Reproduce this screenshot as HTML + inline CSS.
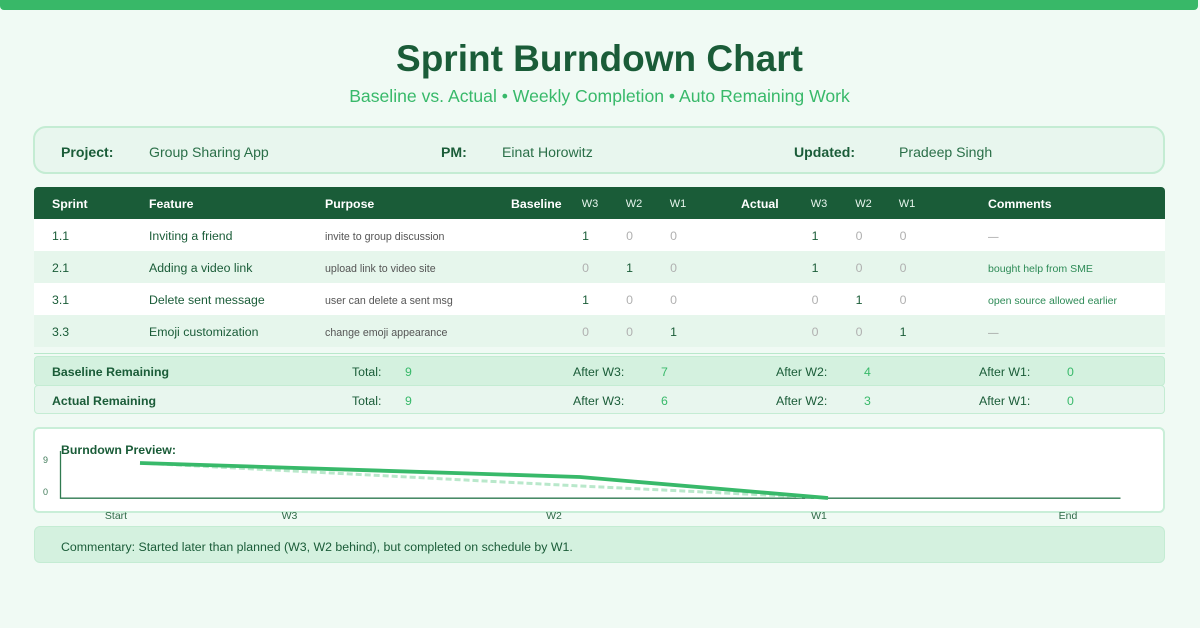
<!DOCTYPE html>
<html><head><meta charset="utf-8">
<style>
html,body{margin:0;padding:0}
body{width:1200px;height:628px;position:relative;overflow:hidden;background:#f0faf4;font-family:"Liberation Sans",sans-serif;color:#1a5c38}
.b{position:absolute;box-sizing:border-box}
.t{position:absolute;white-space:nowrap;line-height:20px;height:20px}
.c{transform:translateX(-50%)}
.hd{color:#fff;font-weight:700;font-size:12.32px}
.hw{color:#e8f6ee;font-size:11px}
.s{font-size:12.32px}
.p{font-size:10.65px;color:#555;margin-top:1px}
.cm{font-size:10.56px;color:#2e8b57;margin-top:1px}
.on{font-size:12.32px;color:#1a5c38}
.off{font-size:12.32px;color:#b0b0b0}
.rl{font-size:12.32px;font-weight:700}
.rk{font-size:12.32px;color:#1a5c38}
.rv{font-size:12.32px;color:#38b96a}
.ik{font-size:14.08px;font-weight:700}
.iv{font-size:14.08px;color:#2a6f48}
.xl{font-size:10.5px;color:#2f6a48;top:506px}
</style></head><body>
<div class="b" style="left:0;top:0;width:1198px;height:10px;background:#38b868;border-radius:0 0 4px 4px"></div>

<div class="t" style="left:0;width:1199px;top:36px;height:46px;line-height:46px;text-align:center;font-size:37px;font-weight:700">Sprint Burndown Chart</div>
<div class="t" style="left:0;width:1199px;top:85px;height:22px;line-height:22px;text-align:center;font-size:17.6px;color:#38b96a">Baseline vs. Actual • Weekly Completion • Auto Remaining Work</div>

<div class="b" style="left:33px;top:126px;width:1132px;height:48px;background:#e8f6ee;border:2px solid #c4ecd3;border-radius:13px"></div>
<div class="t ik" style="left:61px;top:142px">Project:</div>
<div class="t iv" style="left:149px;top:142px">Group Sharing App</div>
<div class="t ik" style="left:441px;top:142px">PM:</div>
<div class="t iv" style="left:502px;top:142px">Einat Horowitz</div>
<div class="t ik" style="left:794px;top:142px">Updated:</div>
<div class="t iv" style="left:899px;top:142px">Pradeep Singh</div>

<div class="b" style="left:34px;top:187px;width:1131px;height:32px;background:#1a5c38;border-radius:4px 4px 0 0"></div>
<div class="t hd" style="left:52px;top:194px">Sprint</div>
<div class="t hd" style="left:149px;top:194px">Feature</div>
<div class="t hd" style="left:325px;top:194px">Purpose</div>
<div class="t hd" style="left:511px;top:194px">Baseline</div>
<div class="t hw c" style="left:590px;top:194px">W3</div>
<div class="t hw c" style="left:634px;top:194px">W2</div>
<div class="t hw c" style="left:678px;top:194px">W1</div>
<div class="t hd" style="left:741px;top:194px">Actual</div>
<div class="t hw c" style="left:819px;top:194px">W3</div>
<div class="t hw c" style="left:863.5px;top:194px">W2</div>
<div class="t hw c" style="left:907px;top:194px">W1</div>
<div class="t hd" style="left:988px;top:194px">Comments</div>

<div class="b" style="left:34px;top:219px;width:1131px;height:32px;background:#fff"></div>
<div class="b" style="left:34px;top:251px;width:1131px;height:32px;background:#e6f6ec"></div>
<div class="b" style="left:34px;top:283px;width:1131px;height:32px;background:#fff"></div>
<div class="b" style="left:34px;top:315px;width:1131px;height:32px;background:#e6f6ec"></div>

<div class="t s" style="left:52px;top:226px">1.1</div>
<div class="t s" style="left:149px;top:226px">Inviting a friend</div>
<div class="t p" style="left:325px;top:226px">invite to group discussion</div>
<div class="t on c" style="left:585.5px;top:226px">1</div><div class="t off c" style="left:629.5px;top:226px">0</div><div class="t off c" style="left:673.5px;top:226px">0</div>
<div class="t on c" style="left:815px;top:226px">1</div><div class="t off c" style="left:859px;top:226px">0</div><div class="t off c" style="left:903px;top:226px">0</div>
<div class="t cm" style="left:988px;top:226px;color:#999">—</div>

<div class="t s" style="left:52px;top:258px">2.1</div>
<div class="t s" style="left:149px;top:258px">Adding a video link</div>
<div class="t p" style="left:325px;top:258px">upload link to video site</div>
<div class="t off c" style="left:585.5px;top:258px">0</div><div class="t on c" style="left:629.5px;top:258px">1</div><div class="t off c" style="left:673.5px;top:258px">0</div>
<div class="t on c" style="left:815px;top:258px">1</div><div class="t off c" style="left:859px;top:258px">0</div><div class="t off c" style="left:903px;top:258px">0</div>
<div class="t cm" style="left:988px;top:258px">bought help from SME</div>

<div class="t s" style="left:52px;top:290px">3.1</div>
<div class="t s" style="left:149px;top:290px">Delete sent message</div>
<div class="t p" style="left:325px;top:290px">user can delete a sent msg</div>
<div class="t on c" style="left:585.5px;top:290px">1</div><div class="t off c" style="left:629.5px;top:290px">0</div><div class="t off c" style="left:673.5px;top:290px">0</div>
<div class="t off c" style="left:815px;top:290px">0</div><div class="t on c" style="left:859px;top:290px">1</div><div class="t off c" style="left:903px;top:290px">0</div>
<div class="t cm" style="left:988px;top:290px">open source allowed earlier</div>

<div class="t s" style="left:52px;top:322px">3.3</div>
<div class="t s" style="left:149px;top:322px">Emoji customization</div>
<div class="t p" style="left:325px;top:322px">change emoji appearance</div>
<div class="t off c" style="left:585.5px;top:322px">0</div><div class="t off c" style="left:629.5px;top:322px">0</div><div class="t on c" style="left:673.5px;top:322px">1</div>
<div class="t off c" style="left:815px;top:322px">0</div><div class="t off c" style="left:859px;top:322px">0</div><div class="t on c" style="left:903px;top:322px">1</div>
<div class="t cm" style="left:988px;top:322px;color:#999">—</div>

<div class="b" style="left:34px;top:353px;width:1131px;height:1px;background:#b9e8cb"></div>

<div class="b" style="left:34px;top:356px;width:1131px;height:30px;background:#d4f1df;border:1px solid #c4ecd3;border-radius:4px"></div>
<div class="b" style="left:34px;top:385px;width:1131px;height:29px;background:#e8f6ee;border:1px solid #c4ecd3;border-radius:4px"></div>
<div class="t rl" style="left:52px;top:362px">Baseline Remaining</div>
<div class="t rk" style="left:352px;top:362px">Total:</div><div class="t rv" style="left:405px;top:362px">9</div>
<div class="t rk" style="left:573px;top:362px">After W3:</div><div class="t rv" style="left:661px;top:362px">7</div>
<div class="t rk" style="left:776px;top:362px">After W2:</div><div class="t rv" style="left:864px;top:362px">4</div>
<div class="t rk" style="left:979px;top:362px">After W1:</div><div class="t rv" style="left:1067px;top:362px">0</div>
<div class="t rl" style="left:52px;top:391px">Actual Remaining</div>
<div class="t rk" style="left:352px;top:391px">Total:</div><div class="t rv" style="left:405px;top:391px">9</div>
<div class="t rk" style="left:573px;top:391px">After W3:</div><div class="t rv" style="left:661px;top:391px">6</div>
<div class="t rk" style="left:776px;top:391px">After W2:</div><div class="t rv" style="left:864px;top:391px">3</div>
<div class="t rk" style="left:979px;top:391px">After W1:</div><div class="t rv" style="left:1067px;top:391px">0</div>

<div class="b" style="left:33px;top:427px;width:1132px;height:86px;background:#fff;border:2px solid #c9eed8;border-radius:6px"></div>
<svg class="b" style="left:0;top:420px" width="1200" height="100" viewBox="0 420 1200 100">
<path d="M60.5 451V498.2H1120.5" fill="none" stroke="#2f7a50" stroke-width="1.3"/>
<path d="M140 463L580 486L828 498" fill="none" stroke="#b9e8cb" stroke-width="3" stroke-dasharray="6 3"/>
<path d="M140 463L580 477L828 498" fill="none" stroke="#38b96a" stroke-width="3.8"/>
</svg>
<div class="t" style="left:61px;top:440px;font-size:12.32px;font-weight:700">Burndown Preview:</div>
<div class="t" style="left:43px;top:450px;font-size:9px;color:#3f7a58">9</div>
<div class="t" style="left:43px;top:482px;font-size:9px;color:#3f7a58">0</div>
<div class="t c xl" style="left:116px">Start</div>
<div class="t c xl" style="left:289.5px">W3</div>
<div class="t c xl" style="left:554px">W2</div>
<div class="t c xl" style="left:819px">W1</div>
<div class="t c xl" style="left:1068px">End</div>

<div class="b" style="left:34px;top:526px;width:1131px;height:37px;background:#d4f1df;border:1px solid #c4ecd3;border-radius:6px"></div>
<div class="t" style="left:61px;top:537px;font-size:12.35px">Commentary: Started later than planned (W3, W2 behind), but completed on schedule by W1.</div>
</body></html>
